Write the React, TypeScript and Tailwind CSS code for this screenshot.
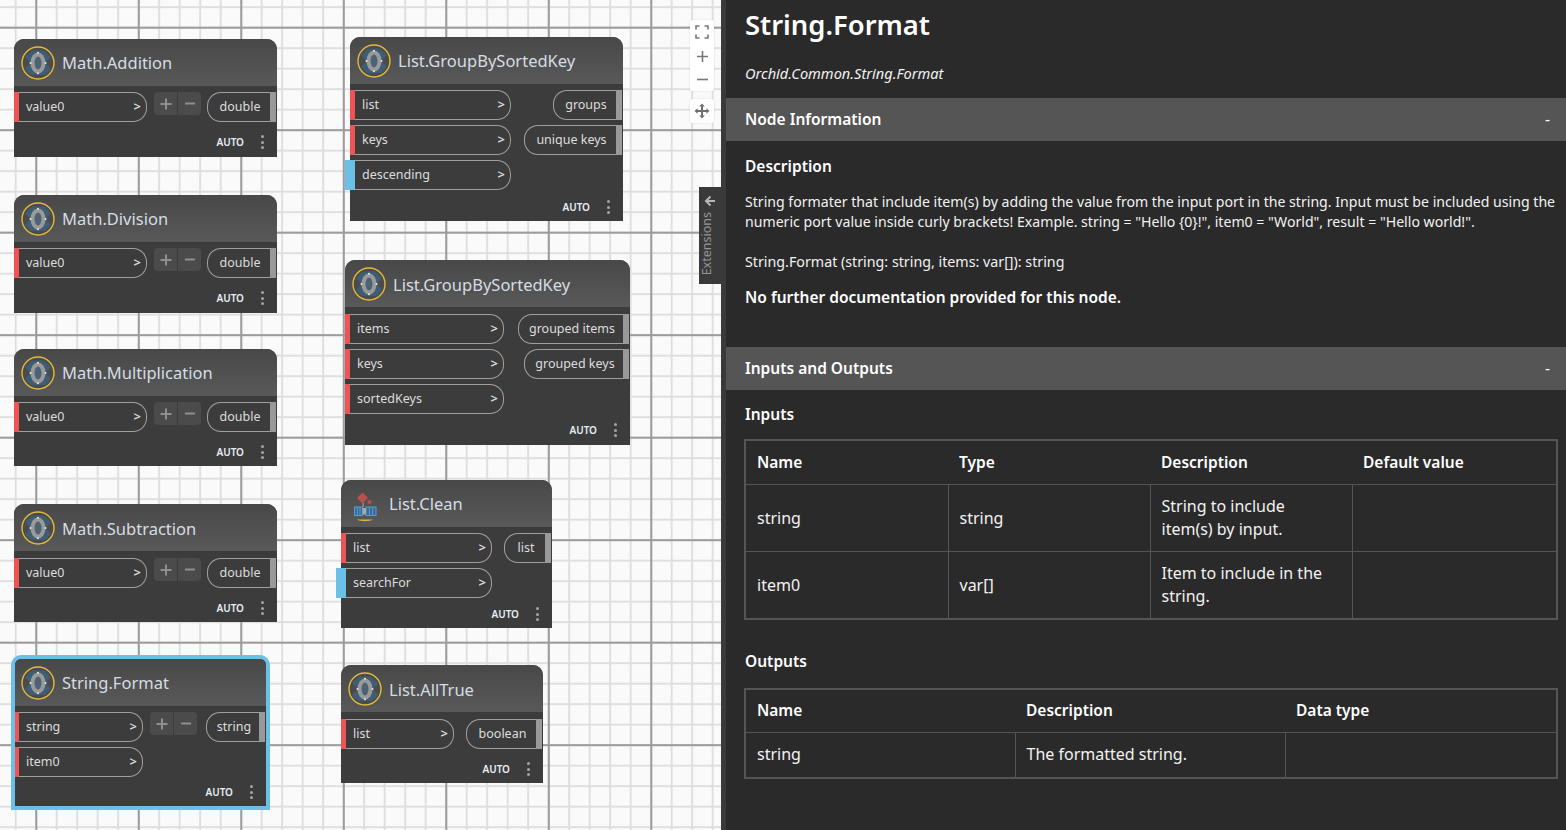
import React from "react";

const font = "font-['Noto_Sans','Liberation_Sans',sans-serif]";

function OrchidIcon() {
  return (
    <svg width="34" height="34" viewBox="0 0 34 34" className="shrink-0">
      <circle cx="17" cy="17" r="16" fill="#4b4b4b" stroke="#e3b93c" strokeWidth="1.4" />
      <path d="M4 11 L11 4.5 H23 L30 11 L25 17 L30 23 L24 29 H10 L4 23 L9 17 Z" fill="#3f5d73" />
      <ellipse cx="17" cy="17" rx="7.5" ry="10.5" fill="#9a9a9a" />
      <ellipse cx="17" cy="17" rx="3.5" ry="6.5" fill="#4d6273" />
      <circle cx="17" cy="6.8" r="1" fill="#e8e8e8" />
      <circle cx="17" cy="27.2" r="1" fill="#e8e8e8" />
      <circle cx="9.5" cy="17" r="1" fill="#e8e8e8" />
      <circle cx="24.5" cy="17" r="1" fill="#e8e8e8" />
    </svg>
  );
}

function ListIcon() {
  return (
    <svg width="34" height="36" viewBox="0 0 34 36" className="mt-[2px] shrink-0">
      <path d="M14.5 5.5 L20 11 L14.5 16.5 L9 11 Z" fill="#b9504c" />
      <path d="M21.5 12.5 L24 15 L21.5 17.5 L19 15 Z" fill="#b9504c" />
      <rect x="14.6" y="16" width="1.4" height="4" fill="#8f8f8f" />
      <rect x="6.5" y="20" width="8" height="8.5" fill="#3d6a8f" stroke="#5a9bd0" strokeWidth="1" />
      <rect x="18" y="20" width="10" height="8.5" fill="#3d6a8f" stroke="#5a9bd0" strokeWidth="1" />
      <path d="M9.3 20v8.5M12 20v8.5M21.3 20v8.5M24.6 20v8.5" stroke="#5a9bd0" strokeWidth="1" />
      <rect x="14.5" y="21" width="3.5" height="6.5" fill="#a8a8a8" />
      <path d="M9 32.5 H25 C22 34.8 12 34.8 9 32.5 Z" fill="#d8b43c" />
    </svg>
  );
}

function InPort({ label, w, blue, thin }: { label: string; w: string; blue?: boolean; thin?: boolean }) {
  return (
    <div className={`relative flex h-[30px] items-center justify-between rounded-r-[14px] border border-l-0 border-[#a0a0a0] pr-[5px] text-[12.5px] text-[#dcdcdc] ${thin ? "pl-[11px]" : "pl-[12px]"} ${w}`}>
      <div className={blue ? "absolute -top-px -bottom-px -left-[5px] w-[10px] bg-[#6ac0e7]" : thin ? "absolute -top-px -bottom-px left-0 w-[4px] bg-[#ef5454]" : "absolute -top-px -bottom-px left-0 w-[5px] bg-[#ef5454]"} />
      <span>{label}</span>
      <span className="text-[13px] font-semibold">&gt;</span>
    </div>
  );
}

function OutPort({ label, w }: { label: string; w: string }) {
  return (
    <div className={`relative flex h-[30px] items-center justify-center rounded-l-[14px] border border-r-0 border-[#a0a0a0] pl-[2px] pr-[6px] text-[12.5px] text-[#dcdcdc] ${w}`}>
      <div className="absolute -top-px -bottom-px right-0 w-[6px] bg-[#999999]" />
      <span>{label}</span>
    </div>
  );
}

function AddRemove() {
  return (
    <div className="ml-[7px] flex h-[23px] w-[47px] gap-[1px] self-start">
      <div className="flex flex-1 items-center justify-center rounded-l-[4px] bg-[#4b4b4b]">
        <svg width="12" height="12" viewBox="0 0 12 12" fill="none" stroke="#8f8f8f" strokeWidth="2">
          <path d="M0.5 6H11.5M6 0.5V11.5" />
        </svg>
      </div>
      <div className="flex flex-1 items-center justify-center rounded-r-[4px] bg-[#4b4b4b]">
        <svg width="10" height="12" viewBox="0 0 10 12" fill="none" stroke="#8f8f8f" strokeWidth="2">
          <path d="M0 5.5H10" />
        </svg>
      </div>
    </div>
  );
}

type NodeProps = {
  title: string;
  pos: string;
  inputs: { label: string; w: string; blue?: boolean }[];
  outputs: { label: string; w: string }[];
  addRemove?: boolean;
  list?: boolean;
  selected?: boolean;
  lower?: boolean;
  autoHigh?: boolean;
};

function Node({ title, pos, inputs, outputs, addRemove, list, selected, lower, autoHigh }: NodeProps) {
  return (
    <div className={`absolute box-border flex flex-col rounded-t-[10px] bg-[#3c3c3c] ${selected ? "border-4 border-[#6ac0e7]" : ""} ${pos}`}>
      <div className={`flex h-[47px] shrink-0 items-center gap-[7px] bg-gradient-to-b from-[#484848] to-[#595959] text-[16.5px] text-[#d5dde3] ${selected ? "rounded-t-[6px] pl-[6px]" : "rounded-t-[10px] pl-[7px]"}`}>
        {list ? <ListIcon /> : <OrchidIcon />}
        <span className={lower ? "mt-[3px]" : "mt-[2px]"}>{title}</span>
      </div>
      <div className={`flex justify-between pr-[1px] ${lower ? "pt-[7px]" : "pt-[6px]"}`}>
        <div className="flex items-start">
          <div className="flex flex-col gap-[5px]">
            {inputs.map((p) => (
              <InPort key={p.label} {...p} thin={selected} />
            ))}
          </div>
          {addRemove && <AddRemove />}
        </div>
        <div className="flex flex-col items-end gap-[5px]">
          {outputs.map((p) => (
            <OutPort key={p.label} {...p} />
          ))}
        </div>
      </div>
      <div className={`flex flex-1 items-end justify-end gap-[17px] pr-[13px] ${autoHigh ? "pb-[7px]" : "pb-[6px]"}`}>
        <span className="text-[10px] font-semibold leading-[16px] text-[#e6eef5]">AUTO</span>
        <div className="mb-[1px] flex flex-col gap-[2.5px]">
          <div className="h-[3px] w-[3px] rounded-full bg-[#a5a5a5]" />
          <div className="h-[3px] w-[3px] rounded-full bg-[#a5a5a5]" />
          <div className="h-[3px] w-[3px] rounded-full bg-[#a5a5a5]" />
        </div>
      </div>
    </div>
  );
}

function Th({ children, w }: { children?: React.ReactNode; w: string }) {
  return <th className={`border-b border-[#555555] px-[11px] text-left text-[15.5px] font-semibold text-white ${w}`}>{children}</th>;
}
function Td({ children, low }: { children?: React.ReactNode; low?: boolean }) {
  return <td className={`border border-[#555555] px-[11px] text-[16px] leading-[23px] text-[#f2f2f2] ${low ? "pt-[2px]" : ""}`}>{children}</td>;
}

function SectionBar({ title }: { title: string }) {
  return (
    <div className="flex h-[43px] items-center justify-between bg-[#555555] pl-[19px] pr-[17px] text-[15.5px] font-semibold text-white">
      <span>{title}</span>
      <span className="font-normal">-</span>
    </div>
  );
}

export default function App() {
  return (
    <div className={`flex h-[830px] w-[1566px] overflow-hidden ${font}`}>
      <div className="relative h-full w-[721px] shrink-0 overflow-hidden bg-[#fafafa] bg-[linear-gradient(to_right,#9c9c9c_1.5px,transparent_1.5px),linear-gradient(to_bottom,#9c9c9c_1.5px,transparent_1.5px),linear-gradient(to_right,#dfdfdf_2px,transparent_2px),linear-gradient(to_bottom,#dfdfdf_2px,transparent_2px)] bg-[size:102.5px_102.5px,102.5px_102.5px,20.5px_20.5px,20.5px_20.5px] bg-[position:35.3px_0,0_26.7px,14.7px_0,0_6.2px]">
        <Node title="Math.Addition" autoHigh pos="left-[14px] top-[39px] w-[263px] h-[118px]" addRemove inputs={[{ label: "value0", w: "w-[133px]" }]} outputs={[{ label: "double", w: "w-[69px]" }]} />
        <Node title="Math.Division" autoHigh pos="left-[14px] top-[195px] w-[263px] h-[118px]" addRemove inputs={[{ label: "value0", w: "w-[133px]" }]} outputs={[{ label: "double", w: "w-[69px]" }]} />
        <Node title="Math.Multiplication" pos="left-[14px] top-[349px] w-[263px] h-[117px]" addRemove inputs={[{ label: "value0", w: "w-[133px]" }]} outputs={[{ label: "double", w: "w-[69px]" }]} />
        <Node title="Math.Subtraction" lower pos="left-[14px] top-[504px] w-[263px] h-[118px]" addRemove inputs={[{ label: "value0", w: "w-[133px]" }]} outputs={[{ label: "double", w: "w-[69px]" }]} />
        <Node title="String.Format" pos="left-[11px] top-[655px] w-[259px] h-[155px]" selected addRemove inputs={[{ label: "string", w: "w-[128px]" }, { label: "item0", w: "w-[128px]" }]} outputs={[{ label: "string", w: "w-[59px]" }]} />
        <Node title="List.GroupBySortedKey" pos="left-[350px] top-[37px] w-[273px] h-[184px]" inputs={[{ label: "list", w: "w-[161px]" }, { label: "keys", w: "w-[161px]" }, { label: "descending", w: "w-[161px]", blue: true }]} outputs={[{ label: "groups", w: "w-[69px]" }, { label: "unique keys", w: "w-[98px]" }]} />
        <Node title="List.GroupBySortedKey" lower autoHigh pos="left-[345px] top-[260px] w-[285px] h-[185px]" inputs={[{ label: "items", w: "w-[159px]" }, { label: "keys", w: "w-[159px]" }, { label: "sortedKeys", w: "w-[159px]" }]} outputs={[{ label: "grouped items", w: "w-[111px]" }, { label: "grouped keys", w: "w-[105px]" }]} />
        <Node title="List.Clean" list pos="left-[341px] top-[480px] w-[211px] h-[148px]" inputs={[{ label: "list", w: "w-[151px]" }, { label: "searchFor", w: "w-[151px]", blue: true }]} outputs={[{ label: "list", w: "w-[47px]" }]} />
        <Node title="List.AllTrue" lower pos="left-[341px] top-[665px] w-[202px] h-[118px]" inputs={[{ label: "list", w: "w-[113px]" }]} outputs={[{ label: "boolean", w: "w-[76px]" }]} />

        <div className="absolute left-[690px] top-[20px] flex h-[71px] w-[24px] flex-col items-center justify-between rounded-[2px] bg-white py-[5px] shadow-[0_0_2px_rgba(0,0,0,0.15)]">
          <svg width="14" height="14" viewBox="0 0 14 14" fill="none" stroke="#777" strokeWidth="1.6">
            <path d="M1 4.5V1H4.5M9.5 1H13V4.5M13 9.5V13H9.5M4.5 13H1V9.5" />
          </svg>
          <svg width="13" height="13" viewBox="0 0 13 13" fill="none" stroke="#777" strokeWidth="1.6">
            <path d="M1 6.5H12M6.5 1V12" />
          </svg>
          <svg width="13" height="13" viewBox="0 0 13 13" fill="none" stroke="#777" strokeWidth="1.6">
            <path d="M1 6.5H12" />
          </svg>
        </div>
        <div className="absolute left-[690px] top-[99px] flex h-[24px] w-[24px] items-center justify-center rounded-[2px] bg-white shadow-[0_0_2px_rgba(0,0,0,0.15)]">
          <svg width="16" height="16" viewBox="0 0 16 16" fill="#6f6f6f">
            <path d="M8 0.5 L10.8 3.6 H9 V7 H12.4 V5.2 L15.5 8 L12.4 10.8 V9 H9 V12.4 H10.8 L8 15.5 L5.2 12.4 H7 V9 H3.6 V10.8 L0.5 8 L3.6 5.2 V7 H7 V3.6 H5.2 Z" />
          </svg>
        </div>
        <div className="absolute left-[699px] top-[187px] flex h-[97px] w-[22px] flex-col items-center bg-[#3a3a3a] pt-[8px]">
          <svg width="12" height="12" viewBox="0 0 12 12" fill="none" stroke="#b5b5b5" strokeWidth="2">
            <path d="M6.5 1.5 L2 6 L6.5 10.5 M2 6 H11" />
          </svg>
          <span className="mr-[6px] mt-[5px] rotate-180 text-[12.5px] leading-[16px] text-[#969696] [writing-mode:vertical-rl]">Extensions</span>
        </div>
      </div>

      <div className="h-full flex-1 border-l-[5px] border-[#3a3a3a] bg-[#2a2a2a] text-[#f2f2f2]">
        <h1 className="pl-[19px] pt-[5px] text-[27.4px] leading-[40px] font-semibold text-white">String.Format</h1>
        <p className="mt-[18px] pl-[19px] text-[14.6px] italic leading-[20px]">Orchid.Common.String.Format</p>
        <div className="mt-[15px]">
          <SectionBar title="Node Information" />
        </div>
        <div className="pl-[19px] pr-[8px]">
          <h3 className="mt-[13px] text-[15.5px] leading-[24px] font-semibold text-white">Description</h3>
          <p className="mt-[14px] text-[14.12px] leading-[20px]">
            {'String formater that include item(s) by adding the value from the input port in the string. Input must be included using the numeric port value inside curly brackets! Example. string = "Hello {0}!", item0 = "World", result = "Hello world!".'}
          </p>
          <p className="mt-[20px] text-[14.25px] leading-[20px]">String.Format (string: string, items: var[]): string</p>
          <p className="mt-[13px] text-[15.5px] leading-[24px] font-semibold text-white">No further documentation provided for this node.</p>
        </div>
        <div className="mt-[38px]">
          <SectionBar title="Inputs and Outputs" />
        </div>
        <div className="pl-[19px] pr-[9px]">
          <h3 className="mt-[12px] text-[15.5px] leading-[24px] font-semibold text-white">Inputs</h3>
          <table className="-ml-[1px] mt-[13px] w-[812px] table-fixed border-collapse border-2 border-[#555555]">
            <thead>
              <tr className="h-[44px]">
                <Th w="w-[203px]">Name</Th>
                <Th w="w-[202px]">Type</Th>
                <Th w="w-[202px]">Description</Th>
                <Th w="w-[205px]">Default value</Th>
              </tr>
            </thead>
            <tbody>
              <tr className="h-[67px]">
                <Td low>string</Td>
                <Td low>string</Td>
                <Td>String to include<br />item(s) by input.</Td>
                <Td />
              </tr>
              <tr className="h-[67.5px]">
                <Td low>item0</Td>
                <Td low>var[]</Td>
                <Td>Item to include in the string.</Td>
                <Td />
              </tr>
            </tbody>
          </table>
          <h3 className="mt-[29px] text-[15.5px] leading-[24px] font-semibold text-white">Outputs</h3>
          <table className="-ml-[1px] mt-[15px] w-[812px] table-fixed border-collapse border-2 border-[#555555]">
            <thead>
              <tr className="h-[44px]">
                <Th w="w-[270px]">Name</Th>
                <Th w="w-[270px]">Description</Th>
                <Th w="w-[272px]">Data type</Th>
              </tr>
            </thead>
            <tbody>
              <tr className="h-[45px]">
                <Td>string</Td>
                <Td>The formatted string.</Td>
                <Td />
              </tr>
            </tbody>
          </table>
        </div>
      </div>
    </div>
  );
}
